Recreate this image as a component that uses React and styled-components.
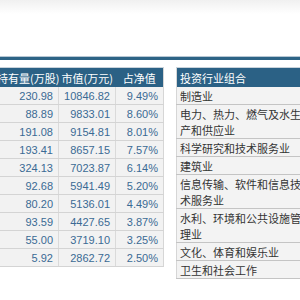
import React from "react"
import styled, { createGlobalStyle } from "styled-components"

const holdings = [
  ["230.98", "10846.82", "9.49%"],
  ["88.89", "9833.01", "8.60%"],
  ["191.08", "9154.81", "8.01%"],
  ["193.41", "8657.15", "7.57%"],
  ["324.13", "7023.87", "6.14%"],
  ["92.68", "5941.49", "5.20%"],
  ["80.20", "5136.01", "4.49%"],
  ["93.59", "4427.65", "3.87%"],
  ["55.00", "3719.10", "3.25%"],
  ["5.92", "2862.72", "2.50%"],
]

const industries = [
  "制造业",
  "电力、热力、燃气及水生产和供应业",
  "科学研究和技术服务业",
  "建筑业",
  "信息传输、软件和信息技术服务业",
  "水利、环境和公共设施管理业",
  "文化、体育和娱乐业",
  "卫生和社会工作",
]

const GlobalStyle = createGlobalStyle`
  html, body {
    margin: 0;
    padding: 0;
    background: #fff;
    overflow: hidden;
  }
  body {
    font-family: "Liberation Sans", "Noto Sans CJK SC", sans-serif;
  }
`

const Page = styled.div`
  width: 300px;
  height: 300px;
  overflow: hidden;
`

const TopShade = styled.div`
  height: 14px;
  background: linear-gradient(#f0f0f0, #ffffff);
`

const Rule = styled.div`
  margin-top: 42px;
  height: 3px;
  background: #2e6486;
  border-top: 1px solid #b7c7d4;
`

const Content = styled.div`
  display: flex;
  align-items: flex-start;
  gap: 12px;
  margin-top: 7px;
  margin-left: -7px;
`

const Table = styled.table`
  border-collapse: collapse;
  table-layout: fixed;
  flex: none;
  width: ${(p) => p.$width}px;
  border-right: 1px solid #d6d6d6;
  border-left: 1px solid #d6d6d6;
`

const HeadCell = styled.th`
  height: 19px;
  padding: 0 3px;
  background: #2b6185;
  border-top: 1px solid #c9d3db;
  color: #fff;
  font-family: "Noto Sans CJK SC", "Liberation Sans", sans-serif;
  font-size: 11px;
  font-weight: normal;
  text-align: ${(p) => p.$align || "center"};
  white-space: nowrap;
  overflow: hidden;
`

const NumCell = styled.td`
  padding: 1px 5px 0 0;
  line-height: 16px;
  background: #f2f2f2;
  border-bottom: 1px solid #d4d4d4;
  border-left: 1px solid #dadada;
  color: #3a6a94;
  font-size: 11px;
  text-align: right;
`

const TextCell = styled.td`
  padding: 1px 4px 0 3px;
  line-height: 16px;
  background: #f3f3f3;
  border-bottom: 1px solid #c4c4c4;
  color: #333;
  font-family: "Noto Sans CJK SC", sans-serif;
  font-size: 11px;
  word-break: break-all;
`

export default function App() {
  return (
    <Page>
      <GlobalStyle />
      <TopShade />
      <Rule />
      <Content>
        <Table $width={170}>
          <colgroup>
            <col style={{ width: 65 }} />
            <col style={{ width: 57 }} />
            <col style={{ width: 48 }} />
          </colgroup>
          <thead>
            <tr>
              <HeadCell>持有量(万股)</HeadCell>
              <HeadCell>市值(万元)</HeadCell>
              <HeadCell>占净值</HeadCell>
            </tr>
          </thead>
          <tbody>
            {holdings.map((row) => (
              <tr key={row[1]}>
                {row.map((v, i) => (
                  <NumCell key={i}>{v}</NumCell>
                ))}
              </tr>
            ))}
          </tbody>
        </Table>
        <Table $width={133}>
          <thead>
            <tr>
              <HeadCell $align="left">投资行业组合</HeadCell>
            </tr>
          </thead>
          <tbody>
            {industries.map((name) => (
              <tr key={name}>
                <TextCell>{name}</TextCell>
              </tr>
            ))}
          </tbody>
        </Table>
      </Content>
    </Page>
  )
}
